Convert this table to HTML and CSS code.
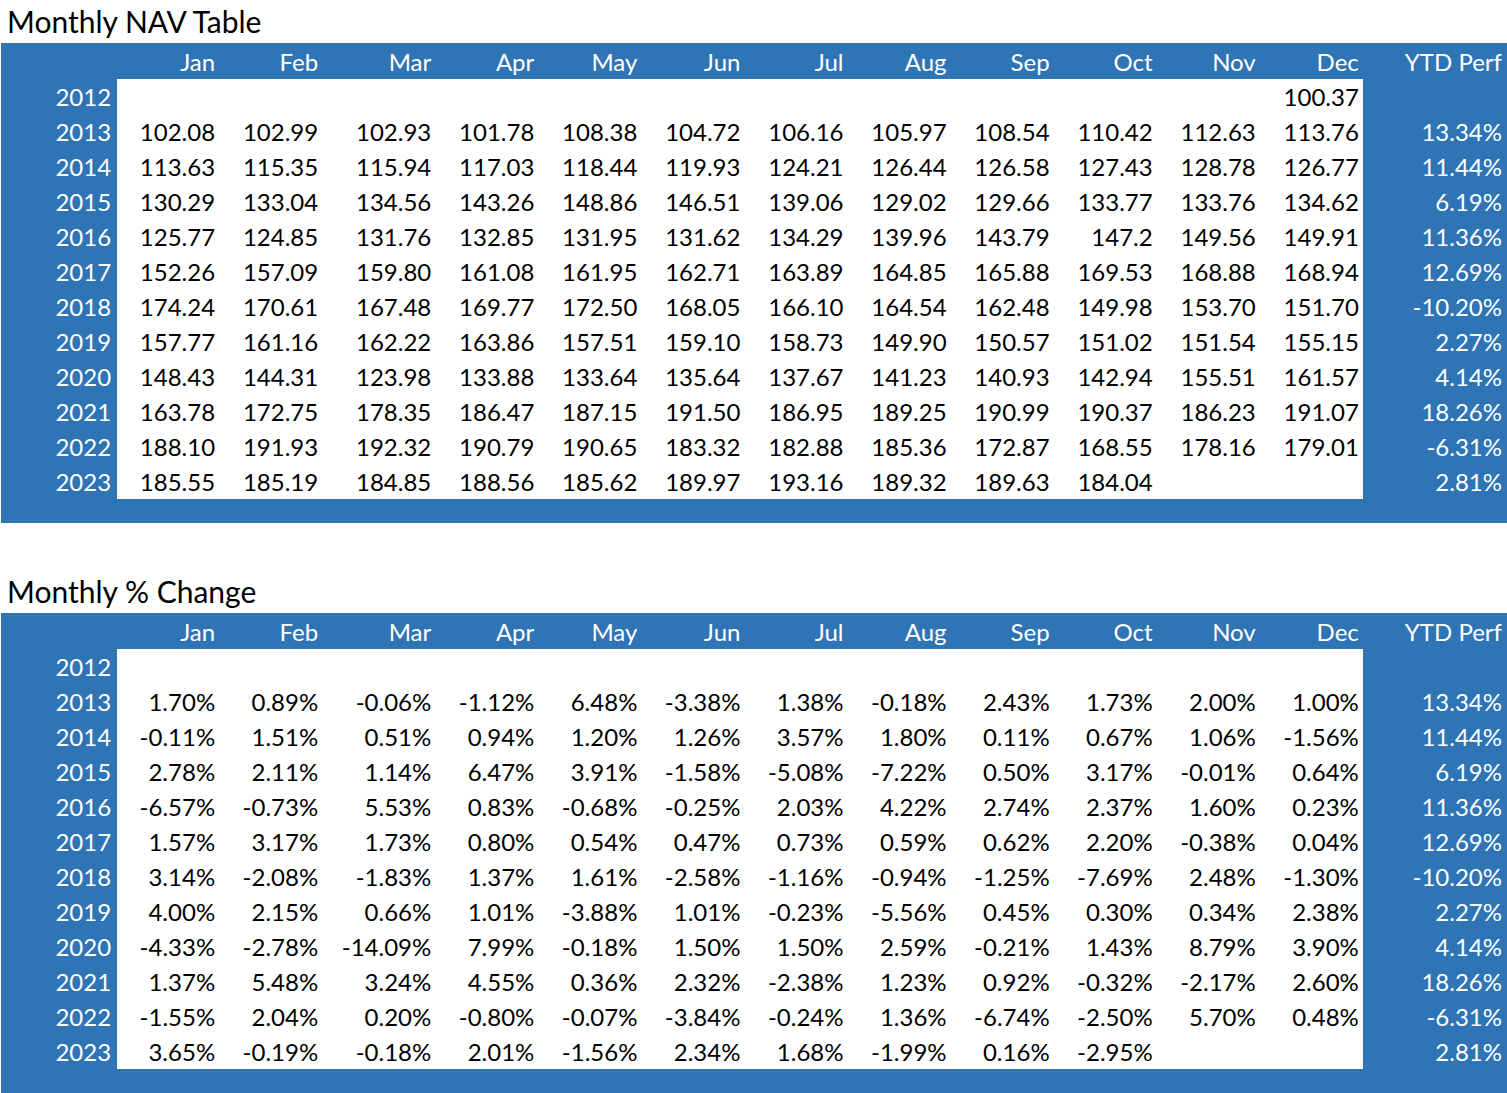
FILE: index.html
```html
<!DOCTYPE html>
<html>
<head>
<meta charset="utf-8">
<link rel="stylesheet" href="styles.css">
</head>
<body>
<section class="sheet">
  <h1 class="title">Monthly NAV Table</h1>
  <div class="block">
    <table class="grid">
      <colgroup>
        <col class="c-year"><col class="c-m1"><col class="c-m"><col class="c-wide"><col class="c-m"><col class="c-m"><col class="c-m"><col class="c-m"><col class="c-m"><col class="c-m"><col class="c-m"><col class="c-m"><col class="c-m"><col class="c-ytd">
      </colgroup>
      <thead>
        <tr><th class="yr"></th><th>Jan</th><th>Feb</th><th>Mar</th><th>Apr</th><th>May</th><th>Jun</th><th>Jul</th><th>Aug</th><th>Sep</th><th>Oct</th><th>Nov</th><th>Dec</th><th class="ytd">YTD Perf</th></tr>
      </thead>
      <tbody>
        <tr><th class="yr">2012</th><td></td><td></td><td></td><td></td><td></td><td></td><td></td><td></td><td></td><td></td><td></td><td>100.37</td><td class="ytd"></td></tr>
        <tr><th class="yr">2013</th><td>102.08</td><td>102.99</td><td>102.93</td><td>101.78</td><td>108.38</td><td>104.72</td><td>106.16</td><td>105.97</td><td>108.54</td><td>110.42</td><td>112.63</td><td>113.76</td><td class="ytd">13.34%</td></tr>
        <tr><th class="yr">2014</th><td>113.63</td><td>115.35</td><td>115.94</td><td>117.03</td><td>118.44</td><td>119.93</td><td>124.21</td><td>126.44</td><td>126.58</td><td>127.43</td><td>128.78</td><td>126.77</td><td class="ytd">11.44%</td></tr>
        <tr><th class="yr">2015</th><td>130.29</td><td>133.04</td><td>134.56</td><td>143.26</td><td>148.86</td><td>146.51</td><td>139.06</td><td>129.02</td><td>129.66</td><td>133.77</td><td>133.76</td><td>134.62</td><td class="ytd">6.19%</td></tr>
        <tr><th class="yr">2016</th><td>125.77</td><td>124.85</td><td>131.76</td><td>132.85</td><td>131.95</td><td>131.62</td><td>134.29</td><td>139.96</td><td>143.79</td><td>147.2</td><td>149.56</td><td>149.91</td><td class="ytd">11.36%</td></tr>
        <tr><th class="yr">2017</th><td>152.26</td><td>157.09</td><td>159.80</td><td>161.08</td><td>161.95</td><td>162.71</td><td>163.89</td><td>164.85</td><td>165.88</td><td>169.53</td><td>168.88</td><td>168.94</td><td class="ytd">12.69%</td></tr>
        <tr><th class="yr">2018</th><td>174.24</td><td>170.61</td><td>167.48</td><td>169.77</td><td>172.50</td><td>168.05</td><td>166.10</td><td>164.54</td><td>162.48</td><td>149.98</td><td>153.70</td><td>151.70</td><td class="ytd">-10.20%</td></tr>
        <tr><th class="yr">2019</th><td>157.77</td><td>161.16</td><td>162.22</td><td>163.86</td><td>157.51</td><td>159.10</td><td>158.73</td><td>149.90</td><td>150.57</td><td>151.02</td><td>151.54</td><td>155.15</td><td class="ytd">2.27%</td></tr>
        <tr><th class="yr">2020</th><td>148.43</td><td>144.31</td><td>123.98</td><td>133.88</td><td>133.64</td><td>135.64</td><td>137.67</td><td>141.23</td><td>140.93</td><td>142.94</td><td>155.51</td><td>161.57</td><td class="ytd">4.14%</td></tr>
        <tr><th class="yr">2021</th><td>163.78</td><td>172.75</td><td>178.35</td><td>186.47</td><td>187.15</td><td>191.50</td><td>186.95</td><td>189.25</td><td>190.99</td><td>190.37</td><td>186.23</td><td>191.07</td><td class="ytd">18.26%</td></tr>
        <tr><th class="yr">2022</th><td>188.10</td><td>191.93</td><td>192.32</td><td>190.79</td><td>190.65</td><td>183.32</td><td>182.88</td><td>185.36</td><td>172.87</td><td>168.55</td><td>178.16</td><td>179.01</td><td class="ytd">-6.31%</td></tr>
        <tr><th class="yr">2023</th><td>185.55</td><td>185.19</td><td>184.85</td><td>188.56</td><td>185.62</td><td>189.97</td><td>193.16</td><td>189.32</td><td>189.63</td><td>184.04</td><td></td><td></td><td class="ytd">2.81%</td></tr>
      </tbody>
    </table>
  </div>
</section>

<section class="sheet second">
  <h1 class="title">Monthly % Change</h1>
  <div class="block">
    <table class="grid">
      <colgroup>
        <col class="c-year"><col class="c-m1"><col class="c-m"><col class="c-wide"><col class="c-m"><col class="c-m"><col class="c-m"><col class="c-m"><col class="c-m"><col class="c-m"><col class="c-m"><col class="c-m"><col class="c-m"><col class="c-ytd">
      </colgroup>
      <thead>
        <tr><th class="yr"></th><th>Jan</th><th>Feb</th><th>Mar</th><th>Apr</th><th>May</th><th>Jun</th><th>Jul</th><th>Aug</th><th>Sep</th><th>Oct</th><th>Nov</th><th>Dec</th><th class="ytd">YTD Perf</th></tr>
      </thead>
      <tbody>
        <tr><th class="yr">2012</th><td></td><td></td><td></td><td></td><td></td><td></td><td></td><td></td><td></td><td></td><td></td><td></td><td class="ytd"></td></tr>
        <tr><th class="yr">2013</th><td>1.70%</td><td>0.89%</td><td>-0.06%</td><td>-1.12%</td><td>6.48%</td><td>-3.38%</td><td>1.38%</td><td>-0.18%</td><td>2.43%</td><td>1.73%</td><td>2.00%</td><td>1.00%</td><td class="ytd">13.34%</td></tr>
        <tr><th class="yr">2014</th><td>-0.11%</td><td>1.51%</td><td>0.51%</td><td>0.94%</td><td>1.20%</td><td>1.26%</td><td>3.57%</td><td>1.80%</td><td>0.11%</td><td>0.67%</td><td>1.06%</td><td>-1.56%</td><td class="ytd">11.44%</td></tr>
        <tr><th class="yr">2015</th><td>2.78%</td><td>2.11%</td><td>1.14%</td><td>6.47%</td><td>3.91%</td><td>-1.58%</td><td>-5.08%</td><td>-7.22%</td><td>0.50%</td><td>3.17%</td><td>-0.01%</td><td>0.64%</td><td class="ytd">6.19%</td></tr>
        <tr><th class="yr">2016</th><td>-6.57%</td><td>-0.73%</td><td>5.53%</td><td>0.83%</td><td>-0.68%</td><td>-0.25%</td><td>2.03%</td><td>4.22%</td><td>2.74%</td><td>2.37%</td><td>1.60%</td><td>0.23%</td><td class="ytd">11.36%</td></tr>
        <tr><th class="yr">2017</th><td>1.57%</td><td>3.17%</td><td>1.73%</td><td>0.80%</td><td>0.54%</td><td>0.47%</td><td>0.73%</td><td>0.59%</td><td>0.62%</td><td>2.20%</td><td>-0.38%</td><td>0.04%</td><td class="ytd">12.69%</td></tr>
        <tr><th class="yr">2018</th><td>3.14%</td><td>-2.08%</td><td>-1.83%</td><td>1.37%</td><td>1.61%</td><td>-2.58%</td><td>-1.16%</td><td>-0.94%</td><td>-1.25%</td><td>-7.69%</td><td>2.48%</td><td>-1.30%</td><td class="ytd">-10.20%</td></tr>
        <tr><th class="yr">2019</th><td>4.00%</td><td>2.15%</td><td>0.66%</td><td>1.01%</td><td>-3.88%</td><td>1.01%</td><td>-0.23%</td><td>-5.56%</td><td>0.45%</td><td>0.30%</td><td>0.34%</td><td>2.38%</td><td class="ytd">2.27%</td></tr>
        <tr><th class="yr">2020</th><td>-4.33%</td><td>-2.78%</td><td>-14.09%</td><td>7.99%</td><td>-0.18%</td><td>1.50%</td><td>1.50%</td><td>2.59%</td><td>-0.21%</td><td>1.43%</td><td>8.79%</td><td>3.90%</td><td class="ytd">4.14%</td></tr>
        <tr><th class="yr">2021</th><td>1.37%</td><td>5.48%</td><td>3.24%</td><td>4.55%</td><td>0.36%</td><td>2.32%</td><td>-2.38%</td><td>1.23%</td><td>0.92%</td><td>-0.32%</td><td>-2.17%</td><td>2.60%</td><td class="ytd">18.26%</td></tr>
        <tr><th class="yr">2022</th><td>-1.55%</td><td>2.04%</td><td>0.20%</td><td>-0.80%</td><td>-0.07%</td><td>-3.84%</td><td>-0.24%</td><td>1.36%</td><td>-6.74%</td><td>-2.50%</td><td>5.70%</td><td>0.48%</td><td class="ytd">-6.31%</td></tr>
        <tr><th class="yr">2023</th><td>3.65%</td><td>-0.19%</td><td>-0.18%</td><td>2.01%</td><td>-1.56%</td><td>2.34%</td><td>1.68%</td><td>-1.99%</td><td>0.16%</td><td>-2.95%</td><td></td><td></td><td class="ytd">2.81%</td></tr>
      </tbody>
    </table>
  </div>
</section>
</body>
</html>
```

FILE: styles.css
```css
html, body {
  margin: 0;
  padding: 0;
  background: #ffffff;
}

body {
  font-family: "Lato", "Open Sans", sans-serif;
  color: #000000;
  overflow: hidden;
}

.sheet {
  width: 1507px;
}

.second {
  margin-top: 47px;
}

.title {
  margin: 0;
  height: 43px;
  line-height: 43px;
  padding-left: 7px;
  font-size: 30px;
  font-weight: normal;
  color: #000000;
  box-sizing: border-box;
}

.block {
  margin-left: 1px;
  width: 1506px;
  background: #2f74b5;
  padding-bottom: 24px;
}

.grid {
  border-collapse: collapse;
  border-spacing: 0;
  table-layout: fixed;
  width: 1506px;
  font-size: 24px;
}

.c-year { width: 116px; }
.c-m1 { width: 102px; }
.c-m { width: 103px; }
.c-wide { width: 113px; }
.c-ytd { width: 144px; }

.grid th,
.grid td {
  padding: 0 4px 0 0;
  text-align: right;
  white-space: nowrap;
  font-weight: normal;
  vertical-align: bottom;
}

.grid thead th {
  height: 36px;
  line-height: 35px;
  color: #ffffff;
}

.grid tbody th,
.grid tbody td {
  height: 35px;
  line-height: 34px;
}

.grid tbody td {
  background: #ffffff;
  color: #000000;
}

.grid .yr {
  color: #ffffff;
  padding-right: 6px;
}

.grid tbody td.ytd {
  background: #2f74b5;
  color: #ffffff;
  padding-right: 5px;
}

.grid thead th.ytd {
  padding-right: 5px;
}
```
